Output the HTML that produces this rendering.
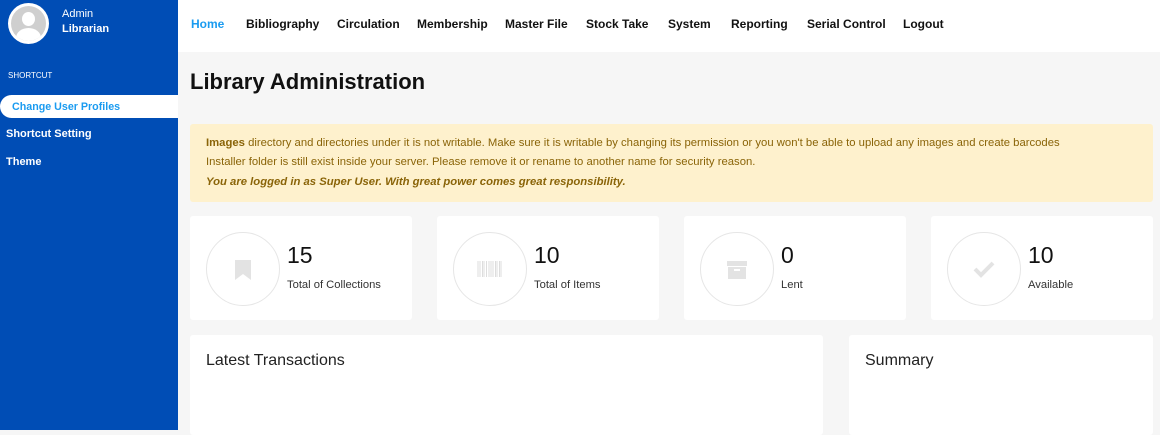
<!DOCTYPE html><html><head><style>
body{margin:0;width:1160px;height:430px;overflow:hidden;background:#f6f6f6;font-family:"Liberation Sans",sans-serif;position:relative}
.sb{position:absolute;left:0;top:0;width:178px;height:430px;background:#004db5;color:#fff}
.av{position:absolute;left:8px;top:3px;width:41px;height:41px;border-radius:50%;background:#fff}
.av i{position:absolute;left:3px;top:3px;width:35px;height:35px;border-radius:50%;background:#cfcfcf;overflow:hidden}
.av i:before{content:"";position:absolute;left:11px;top:6px;width:13px;height:14px;border-radius:50%;background:#fff}
.av i:after{content:"";position:absolute;left:5px;top:22px;width:25px;height:20px;border-radius:50% 50% 0 0;background:#fff}
.top{position:absolute;left:178px;top:0;width:982px;height:52px;background:#fff}
.nav{position:absolute;top:17px;font-size:12px;font-weight:bold;color:#111}
.card{position:absolute;top:216px;width:222px;height:104px;background:#fff;border-radius:3px}
.cir{position:absolute;left:16px;top:16px;width:72px;height:72px;border:1px solid #e6e6e6;border-radius:50%}
.num{position:absolute;left:97px;top:26px;font-size:23px;color:#111}
.lbl{position:absolute;left:97px;top:63px;font-size:11.2px;color:#333}
.panel{position:absolute;top:335px;height:100px;background:#fff;border-radius:3px}
.panel span{position:absolute;left:16px;top:17px;font-size:16px;color:#222}
</style></head><body>
<div class="sb">
<div class="av"><i></i></div>
<div style="position:absolute;left:62px;top:8px;font-size:11px">Admin</div>
<div style="position:absolute;left:62px;top:23px;font-size:11px;font-weight:bold">Librarian</div>
<div style="position:absolute;left:8px;top:71px;font-size:8px">SHORTCUT</div>
<div style="position:absolute;left:0;top:95px;width:178px;height:23px;background:#fff;border-radius:12px 0 0 12px"></div>
<div style="position:absolute;left:12px;top:101px;font-size:10.7px;font-weight:bold;color:#1a9bf0">Change User Profiles</div>
<div style="position:absolute;left:6px;top:128px;font-size:11px;font-weight:bold">Shortcut Setting</div>
<div style="position:absolute;left:6px;top:156px;font-size:11px;font-weight:bold">Theme</div>
</div>
<div class="top"></div>
<div class="nav" style="left:191px;color:#1a9bf0">Home</div>
<div class="nav" style="left:246px">Bibliography</div>
<div class="nav" style="left:337px">Circulation</div>
<div class="nav" style="left:417px">Membership</div>
<div class="nav" style="left:505px">Master File</div>
<div class="nav" style="left:586px">Stock Take</div>
<div class="nav" style="left:668px">System</div>
<div class="nav" style="left:731px">Reporting</div>
<div class="nav" style="left:807px">Serial Control</div>
<div class="nav" style="left:903px">Logout</div>
<div style="position:absolute;left:190px;top:69px;font-size:22px;font-weight:bold;color:#111">Library Administration</div>
<div style="position:absolute;left:190px;top:124px;width:963px;height:78px;background:#fef1cd;border-radius:3px;font-size:11.3px;color:#8a6408">
<div style="position:absolute;left:16px;top:13px;white-space:nowrap"><b>Images</b> directory and directories under it is not writable. Make sure it is writable by changing its permission or you won't be able to upload any images and create barcodes</div>
<div style="position:absolute;left:16px;top:32px;white-space:nowrap">Installer folder is still exist inside your server. Please remove it or rename to another name for security reason.</div>
<div style="position:absolute;left:16px;top:52px;font-weight:bold;font-style:italic;white-space:nowrap">You are logged in as Super User. With great power comes great responsibility.</div>
</div>
<div class="card" style="left:190px"><div class="cir"><svg width="72" height="72"><path d="M28 27h16v20l-8-6-8 6z" fill="#e3e3e3"/></svg></div><div class="num">15</div><div class="lbl">Total of Collections</div></div>
<div class="card" style="left:437px"><div class="cir"><svg width="72" height="72"><g stroke="#ddd" stroke-width="1"><path d="M24 28v16M26 28v16M28.5 28v16M30 28v16M32.5 28v16M35 28v16M37 28v16M39 28v16M41.5 28v16M43 28v16M45.5 28v16M47 28v16"/></g></svg></div><div class="num">10</div><div class="lbl">Total of Items</div></div>
<div class="card" style="left:684px"><div class="cir"><svg width="72" height="72"><rect x="26" y="28" width="20" height="5" fill="#e3e3e3"/><rect x="27" y="34" width="18" height="12" fill="#e3e3e3"/><rect x="33" y="36" width="6" height="2" fill="#fff"/></svg></div><div class="num">0</div><div class="lbl">Lent</div></div>
<div class="card" style="left:931px"><div class="cir"><svg width="72" height="72"><path d="M27 36l6 6 12-12" stroke="#e3e3e3" stroke-width="4" fill="none"/></svg></div><div class="num">10</div><div class="lbl">Available</div></div>
<div class="panel" style="left:190px;width:633px"><span>Latest Transactions</span></div>
<div class="panel" style="left:849px;width:304px"><span>Summary</span></div>
</body></html>
